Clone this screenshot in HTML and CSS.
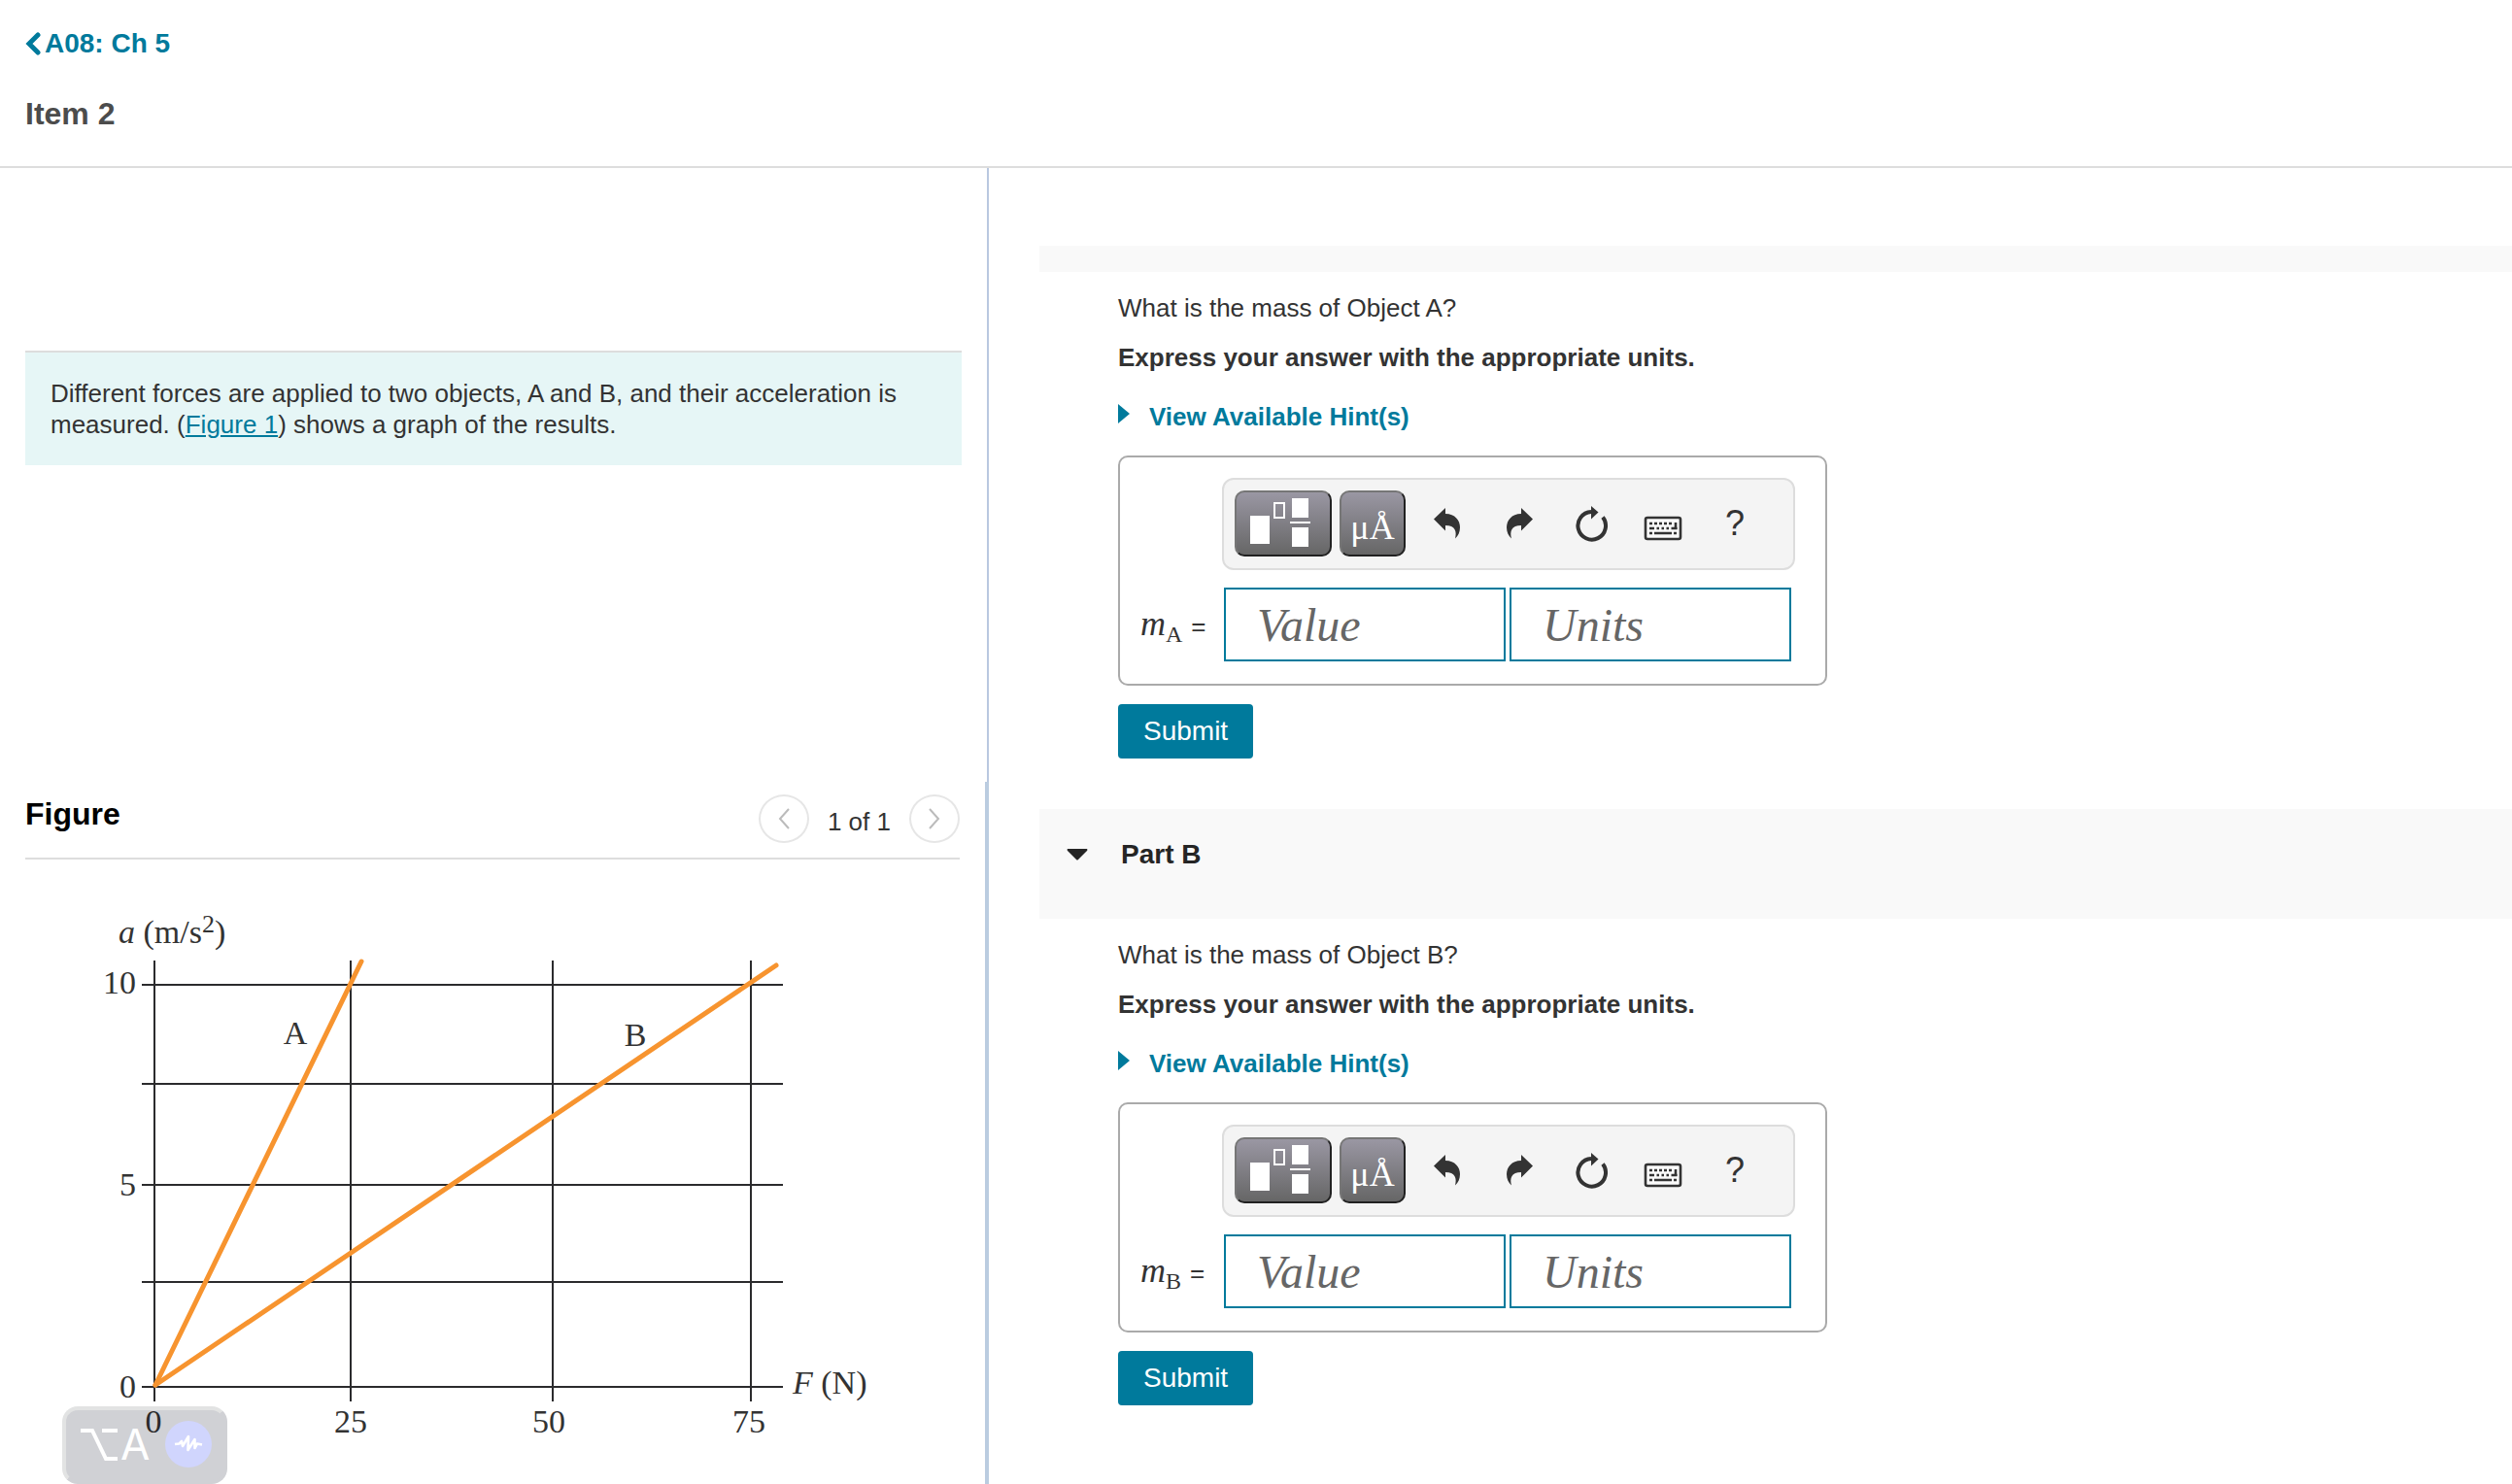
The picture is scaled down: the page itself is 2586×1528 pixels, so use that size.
FILE: index.html
```html
<!DOCTYPE html>
<html lang="en">
<head>
    <meta charset="UTF-8">
    <meta name="viewport" content="width=device-width, initial-scale=1.0">
    <title>A08: Ch 5 - Item 2</title>
    <link rel="stylesheet" href="styles.css">
</head>
<body>

<!-- icons shared by both answer toolbars -->
<svg class="icon-defs" aria-hidden="true">
    <symbol id="icon-templates" viewBox="2 2 96 64">
        <rect x="16" y="26" width="20" height="29" fill="#fff"/>
        <rect x="41" y="13" width="10" height="15" fill="none" stroke="#fff" stroke-width="2"/>
        <rect x="59" y="8" width="17" height="20" fill="#fff"/>
        <rect x="57" y="32" width="21" height="2" fill="#fff"/>
        <rect x="59" y="38" width="17" height="20" fill="#fff"/>
    </symbol>
    <symbol id="icon-undo" viewBox="0 0 40 40">
        <path d="M6 15.5L18 4V10C28 10 33 17 33 24C33 29 31 33 28 35.5C30 28 28 22 18 22V27.5Z" fill="#333"/>
    </symbol>
    <symbol id="icon-redo" viewBox="0 0 40 40">
        <path d="M34 15.5L22 4V10C12 10 7 17 7 24C7 29 9 33 12 35.5C10 28 12 22 22 22V27.5Z" fill="#333"/>
    </symbol>
    <symbol id="icon-reset" viewBox="0 0 40 40">
        <path d="M32 13.5A14.3 14.3 0 1 1 20 8" fill="none" stroke="#333" stroke-width="4"/>
        <path d="M20 2L27.5 8.5L20 15.5Z" fill="#333"/>
    </symbol>
    <symbol id="icon-keyboard" viewBox="0 0 40 40">
        <rect x="2" y="14" width="36" height="22" rx="2" fill="#fafafa" stroke="#333" stroke-width="2.6"/>
        <path d="M6 20h3M11 20h3M16 20h3M21 20h3M26 20h3M6 25h5M13.500 25h2.500M18.500 25h2.500M23.500 25h2.500M28.500 25h6M6 30h3M11 30h18M31 30h3" stroke="#333" stroke-width="2.6"/>
        <path d="M33 19v7" stroke="#333" stroke-width="2.6"/>
    </symbol>
</svg>

<header class="page-header">
    <a class="back-link" href="#">
        <svg width="16" height="24" viewBox="0 0 16 24" aria-hidden="true"><path d="M13 3L4 12L13 21" fill="none" stroke="#007a9c" stroke-width="5" stroke-linecap="round"/></svg>
        <span>A08: Ch 5</span>
    </a>
    <h1>Item 2</h1>
</header>

<main class="item">
    <div class="left">
        <section class="problem">
            <p class="intro">Different forces are applied to two objects, A and B, and their acceleration is measured. (<a href="#figure">Figure 1</a>) shows a graph of the results.</p>
        </section>

        <section class="figure" id="figure">
            <div class="figure-head">
                <h2>Figure</h2>
                <div class="pager">
                    <button type="button" aria-label="Previous figure">
                        <svg width="16" height="24" viewBox="0 0 16 24"><path d="M13 2L4 12L13 22" fill="none" stroke="#bbb" stroke-width="2"/></svg>
                    </button>
                    <span>1 of 1</span>
                    <button type="button" aria-label="Next figure">
                        <svg width="16" height="24" viewBox="0 0 16 24"><path d="M3 2L12 12L3 22" fill="none" stroke="#bbb" stroke-width="2"/></svg>
                    </button>
                </div>
            </div>
            <svg class="graph" viewBox="0 0 962 640" role="img" aria-label="Acceleration against force for A and B">
                <g stroke="#2b2b2d" stroke-width="2">
                    <path d="M133 104V558M335 104V558M543 104V558M747 104V558"/>
                    <path d="M120 129H780M120 231H780M120 335H780M120 435H780M120 543H780"/>
                </g>
                <g stroke="#f7942f" stroke-width="5" stroke-linecap="round">
                    <path d="M134 541L346 105"/>
                    <path d="M134 541L773 109"/>
                </g>
                <g class="labels">
                    <text x="96" y="86"><tspan font-style="italic">a</tspan> (m/s<tspan class="sup" dy="-11">2</tspan><tspan dy="11">)</tspan></text>
                    <text x="790" y="550"><tspan font-style="italic">F</tspan> (N)</text>
                    <text class="mid" x="278" y="190">A</text>
                    <text class="mid" x="628" y="192">B</text>
                    <text class="end" x="114" y="138">10</text>
                    <text class="end" x="114" y="346">5</text>
                    <text class="end" x="114" y="554">0</text>
                    <text class="mid" x="132" y="590">0</text>
                    <text class="mid" x="335" y="590">25</text>
                    <text class="mid" x="539" y="590">50</text>
                    <text class="mid" x="745" y="590">75</text>
                </g>
            </svg>
        </section>
    </div>

    <div class="right">
        <section class="part">
            <div class="part-strip"></div>
            <div class="part-body">
                <p>What is the mass of Object A?</p>
                <p><b>Express your answer with the appropriate units.</b></p>
                <a class="hints" href="#">
                    <svg width="12" height="20" viewBox="0 0 12 20" aria-hidden="true"><path d="M0 0L12 10L0 20Z" fill="#007a9c"/></svg>
                    <span>View Available Hint(s)</span>
                </a>
                <div class="answer">
                    <div class="toolbar">
                        <button type="button" class="tool dark wide" aria-label="Templates"><svg width="96" height="64"><use href="#icon-templates"/></svg></button>
                        <button type="button" class="tool dark units">μÅ</button>
                        <div class="tools">
                            <button type="button" class="tool" aria-label="Undo"><svg width="40" height="40"><use href="#icon-undo"/></svg></button>
                            <button type="button" class="tool" aria-label="Redo"><svg width="40" height="40"><use href="#icon-redo"/></svg></button>
                            <button type="button" class="tool" aria-label="Reset"><svg width="40" height="40"><use href="#icon-reset"/></svg></button>
                            <button type="button" class="tool" aria-label="Keyboard"><svg width="40" height="40"><use href="#icon-keyboard"/></svg></button>
                            <button type="button" class="tool">?</button>
                        </div>
                    </div>
                    <label for="valueA"><i>m</i><sub>A</sub> <span>=</span></label>
                    <div class="fields">
                        <input type="text" id="valueA" placeholder="Value">
                        <input type="text" id="unitsA" placeholder="Units" aria-label="Units">
                    </div>
                </div>
                <button type="submit" class="submit">Submit</button>
            </div>
        </section>

        <section class="part">
            <div class="part-head">
                <button type="button" aria-label="Collapse Part B">
                    <svg width="22" height="12" viewBox="0 0 22 12"><path d="M1 0H21Q22 1 21 2L12 11Q11 12 10 11L1 2Q0 1 1 0Z" fill="#252525"/></svg>
                </button>
                <h2>Part B</h2>
            </div>
            <div class="part-body">
                <p>What is the mass of Object B?</p>
                <p><b>Express your answer with the appropriate units.</b></p>
                <a class="hints" href="#">
                    <svg width="12" height="20" viewBox="0 0 12 20" aria-hidden="true"><path d="M0 0L12 10L0 20Z" fill="#007a9c"/></svg>
                    <span>View Available Hint(s)</span>
                </a>
                <div class="answer">
                    <div class="toolbar">
                        <button type="button" class="tool dark wide" aria-label="Templates"><svg width="96" height="64"><use href="#icon-templates"/></svg></button>
                        <button type="button" class="tool dark units">μÅ</button>
                        <div class="tools">
                            <button type="button" class="tool" aria-label="Undo"><svg width="40" height="40"><use href="#icon-undo"/></svg></button>
                            <button type="button" class="tool" aria-label="Redo"><svg width="40" height="40"><use href="#icon-redo"/></svg></button>
                            <button type="button" class="tool" aria-label="Reset"><svg width="40" height="40"><use href="#icon-reset"/></svg></button>
                            <button type="button" class="tool" aria-label="Keyboard"><svg width="40" height="40"><use href="#icon-keyboard"/></svg></button>
                            <button type="button" class="tool">?</button>
                        </div>
                    </div>
                    <label for="valueB"><i>m</i><sub>B</sub> <span>=</span></label>
                    <div class="fields">
                        <input type="text" id="valueB" placeholder="Value">
                        <input type="text" id="unitsB" placeholder="Units" aria-label="Units">
                    </div>
                </div>
                <button type="submit" class="submit">Submit</button>
            </div>
        </section>
    </div>
</main>

<!-- keyboard shortcut badge, floats over the page -->
<div class="shortcut">
    <svg width="38" height="33" viewBox="0 0 38 33" aria-hidden="true"><path d="M0 2H12L26 31H38M22 2H38" fill="none" stroke="#fff" stroke-width="4"/></svg>
    <span>A</span>
    <svg class="wave" width="48" height="48" viewBox="0 0 48 48" aria-hidden="true">
        <circle cx="24" cy="24" r="24" fill="#d0d5fd"/>
        <path d="M10 24L14.500 23.500L17 21L18 26L24 16L23.500 30L30.500 19L30.500 28L33 23.500L38 24.500" fill="none" stroke="#fff" stroke-width="2.6" stroke-linejoin="round"/>
    </svg>
</div>

</body>
</html>
```
FILE: styles.css
```css
* {
    box-sizing: border-box;
}
body {
    margin: 0;
    min-height: 100vh;
    display: flex;
    flex-direction: column;
    background-color: #fff;
    color: #333;
    font-family: "Liberation Sans", Arial, sans-serif;
    font-size: 26px;
    line-height: 32px;
}
h1, h2, p {
    margin: 0;
}
a {
    color: #007a9c;
}
button {
    font-family: inherit;
    padding: 0;
    cursor: pointer;
}
svg {
    display: block;
}
.icon-defs {
    position: absolute;
    width: 0;
    height: 0;
}

/* header */
.page-header {
    padding: 29px 26px 34px;
    border-bottom: 2px solid #ddd;
}
.back-link {
    display: flex;
    align-items: center;
    gap: 4px;
    width: fit-content;
    font-size: 28px;
    font-weight: bold;
    text-decoration: none;
}
.page-header h1 {
    margin-top: 36px;
    color: #4c4c4c;
    font-size: 32px;
    line-height: 40px;
}

/* two columns */
.item {
    flex: 1;
    display: grid;
    grid-template-columns: 1018px 1fr;
}
.left {
    display: flex;
    flex-direction: column;
}
.problem {
    min-height: 632px;
    padding: 188px 26px 0;
    border-right: 2px solid #b9c8e0;
}
.intro {
    padding: 26px;
    border-top: 2px solid #ddd;
    background-color: #e6f6f6;
}
.figure {
    flex: 1;
    padding: 0 26px;
    border-right: 4px solid #bbcce0;
}
.figure-head {
    display: flex;
    justify-content: space-between;
    align-items: flex-start;
    padding: 13px 0 15px;
    border-bottom: 2px solid #ddd;
}
.figure-head h2 {
    color: #000;
    font-size: 32px;
    line-height: 40px;
}
.pager {
    display: flex;
    align-items: center;
    gap: 19px;
}
.pager span {
    padding-top: 6px;
}
.pager button {
    display: flex;
    align-items: center;
    justify-content: center;
    width: 52px;
    height: 50px;
    border: 2px solid #e6e6e6;
    border-radius: 50%;
    background-color: #fff;
}
.graph {
    width: 100%;
}
.labels {
    fill: #333;
    font-family: "Liberation Serif", "Times New Roman", serif;
    font-size: 34px;
}
.labels .sup {
    font-size: 26px;
}
.labels .mid {
    text-anchor: middle;
}
.labels .end {
    text-anchor: end;
}

/* question parts */
.right {
    padding: 80px 0 0 52px;
}
.part-strip {
    height: 27px;
    background-color: #f9f9f9;
}
.part-head {
    display: flex;
    align-items: center;
    gap: 34px;
    padding: 31px 28px 50px;
    background-color: #f9f9f9;
}
.part-head button {
    border: none;
    background: none;
}
.part-head h2 {
    color: #252525;
    font-size: 28px;
    line-height: 32px;
}
.part-body {
    display: flex;
    flex-direction: column;
    align-items: flex-start;
    padding: 21px 0 52px 81px;
}
.part-body p {
    margin-bottom: 19px;
}
.hints {
    display: flex;
    gap: 20px;
    margin-top: 10px;
    font-weight: bold;
    text-decoration: none;
}
.hints svg {
    margin-top: 3px;
}
.answer {
    display: grid;
    grid-template-columns: 105px 590px;
    row-gap: 18px;
    margin: 24px 0 19px;
    padding: 21px 31px 23px 0;
    border: 2px solid #aaa;
    border-radius: 10px;
}
.toolbar {
    grid-column: 2;
    display: flex;
    gap: 8px;
    padding: 11px 11px 12px;
    border: 2px solid #ddd;
    border-radius: 12px;
    background-color: #f4f4f4;
}
.tools {
    display: flex;
    margin-left: -2px;
}
.tool {
    display: flex;
    align-items: center;
    justify-content: center;
    width: 74px;
    height: 68px;
    border: none;
    background: none;
    color: #333;
    font-size: 36px;
}
.dark {
    width: 68px;
    border: 2px solid;
    border-color: #767676 #212121 #212121 #767676;
    border-radius: 10px;
    background: linear-gradient(#9a97a3, #666);
    color: #fff;
}
.wide {
    width: 100px;
}
.units {
    padding-top: 8px;
    font-family: "Liberation Serif", "Times New Roman", serif;
}
.answer label {
    align-self: center;
    padding-left: 21px;
    font-family: "Liberation Serif", "Times New Roman", serif;
    font-size: 36px;
    white-space: nowrap;
}
.answer label sub {
    font-size: 24px;
    line-height: 0;
    vertical-align: -7px;
}
.answer label span {
    font-family: "Liberation Sans", Arial, sans-serif;
    font-size: 26px;
}
.fields {
    display: flex;
    gap: 4px;
    padding: 0 2px;
}
.fields input {
    width: 290px;
    height: 76px;
    padding: 0 32px;
    border: 2px solid #007a9c;
    background-color: #fff;
    color: #333;
    font-family: "Liberation Serif", "Times New Roman", serif;
    font-size: 48px;
    font-style: italic;
}
.fields input::placeholder {
    color: #666;
}
.submit {
    height: 56px;
    padding: 0 26px;
    border: none;
    border-radius: 4px;
    background-color: #007a9c;
    color: #fff;
    font-size: 28px;
}

/* shortcut badge */
.shortcut {
    position: fixed;
    left: 64px;
    bottom: 0;
    display: flex;
    align-items: center;
    width: 170px;
    height: 80px;
    padding: 0 12px 2px 15px;
    border: 4px solid #e2e3e3;
    border-right-color: #d0d1d5;
    border-bottom-color: #d0d1d5;
    border-radius: 16px;
    background-color: #d0d1d5;
    color: #fff;
    font-family: Inter, sans-serif;
    font-size: 44px;
    mix-blend-mode: multiply;
}
.shortcut span {
    margin-left: 3px;
}
.shortcut .wave {
    margin-left: auto;
}
```
